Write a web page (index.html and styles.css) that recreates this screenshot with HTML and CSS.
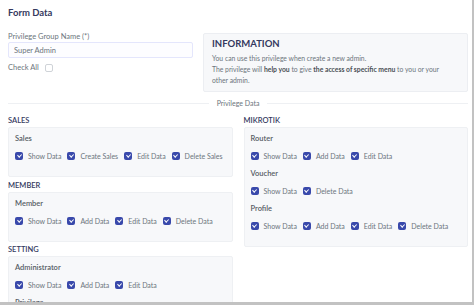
FILE: index.html
```html
<!DOCTYPE html>
<html lang="en">
<head>
    <meta charset="utf-8" />
    <title>Form Data</title>
    <link rel="stylesheet" href="styles.css">
</head>
<body>
    <div class="page">
        <h1 class="cardTitle">Form Data</h1>

        <div class="topRow">
            <div class="groupForm">
                <label class="fieldLabel">Privilege Group Name (*)</label>
                <input type="text" class="textInput" placeholder="Super Admin">
                <div class="checkAll">
                    <span>Check All</span>
                    <span class="box empty"></span>
                </div>
            </div>
            <div class="infoBox">
                <h2>INFORMATION</h2>
                <p>You can use this privilege when create a new admin.</p>
                <p>The privilege will <b>help you</b> to give <b>the access of specific menu</b> to you or your other admin.</p>
            </div>
        </div>

        <div class="divider"><span>Privilege Data</span></div>

        <div class="columns">
            <div class="column">
                <h3 class="sectionTitle">SALES</h3>
                <div class="panel">
                    <h4>Sales</h4>
                    <div class="checks">
                        <span class="item"><span class="box"></span>Show Data</span>
                        <span class="item"><span class="box"></span>Create Sales</span>
                        <span class="item"><span class="box"></span>Edit Data</span>
                        <span class="item"><span class="box"></span>Delete Sales</span>
                    </div>
                </div>

                <h3 class="sectionTitle">MEMBER</h3>
                <div class="panel">
                    <h4>Member</h4>
                    <div class="checks">
                        <span class="item"><span class="box"></span>Show Data</span>
                        <span class="item"><span class="box"></span>Add Data</span>
                        <span class="item"><span class="box"></span>Edit Data</span>
                        <span class="item"><span class="box"></span>Delete Data</span>
                    </div>
                </div>

                <h3 class="sectionTitle">SETTING</h3>
                <div class="panel">
                    <h4>Administrator</h4>
                    <div class="checks">
                        <span class="item"><span class="box"></span>Show Data</span>
                        <span class="item"><span class="box"></span>Add Data</span>
                        <span class="item"><span class="box"></span>Edit Data</span>
                    </div>
                    <h4>Privilege</h4>
                    <div class="checks">
                        <span class="item"><span class="box"></span>Show Data</span>
                        <span class="item"><span class="box"></span>Add Data</span>
                    </div>
                </div>
            </div>

            <div class="column">
                <h3 class="sectionTitle">MIKROTIK</h3>
                <div class="panel">
                    <h4>Router</h4>
                    <div class="checks">
                        <span class="item"><span class="box"></span>Show Data</span>
                        <span class="item"><span class="box"></span>Add Data</span>
                        <span class="item"><span class="box"></span>Edit Data</span>
                    </div>
                    <h4>Voucher</h4>
                    <div class="checks">
                        <span class="item"><span class="box"></span>Show Data</span>
                        <span class="item"><span class="box"></span>Delete Data</span>
                    </div>
                    <h4>Profile</h4>
                    <div class="checks">
                        <span class="item"><span class="box"></span>Show Data</span>
                        <span class="item"><span class="box"></span>Add Data</span>
                        <span class="item"><span class="box"></span>Edit Data</span>
                        <span class="item"><span class="box"></span>Delete Data</span>
                    </div>
                </div>
            </div>
        </div>
    </div>
</body>
</html>
```

FILE: styles.css
```css
h1,
h2,
h3,
h4,
p {
    margin: 0;
    padding: 0;
}

body {
    margin: 0;
    background-color: #c2c2c2;
    font-family: "Lato", "Open Sans", sans-serif;
    color: #6c757d;
}

.page {
    width: 472px;
    height: 302px;
    overflow: hidden;
    background-color: #ffffff;
    box-sizing: border-box;
    padding: 7px 4px 0 8px;
}

.cardTitle {
    font-size: 9.5px;
    font-weight: 700;
    color: #34395e;
    height: 22px;
}

.topRow {
    display: flex;
    gap: 10px;
    align-items: flex-start;
}

.groupForm {
    width: 185px;
    flex-shrink: 0;
    padding-top: 3px;
}

.fieldLabel {
    display: block;
    font-size: 7.5px;
    line-height: 9px;
    color: #6c757d;
    margin-bottom: 1px;
}

.textInput {
    display: block;
    width: 100%;
    height: 16px;
    box-sizing: border-box;
    border: 1px solid #e4e6fc;
    border-radius: 2px;
    background: #fdfdff;
    padding: 0 5px;
    font-family: inherit;
    font-size: 7.5px;
}

.textInput::placeholder {
    color: #6c757d;
}

.checkAll {
    display: flex;
    align-items: center;
    gap: 6px;
    margin-top: 5px;
    font-size: 7.5px;
    line-height: 9px;
}

.infoBox {
    flex: 1;
    margin-top: 4px;
    background-color: #f7f8fa;
    border: 1px solid #eceef2;
    border-radius: 2px;
    padding: 4px 16px 5px 8px;
    font-size: 6.8px;
    line-height: 11px;
}

.infoBox h2 {
    font-size: 9.5px;
    font-weight: 700;
    color: #34395e;
    margin-bottom: 3px;
    line-height: 12px;
}

.infoBox b {
    color: #4a4f55;
}

.divider {
    display: flex;
    align-items: center;
    gap: 8px;
    margin: 6px 0 7px 0;
    font-size: 7px;
    height: 10px;
}

.divider::before,
.divider::after {
    content: "";
    flex: 1;
    height: 1px;
    background-color: #eef0f3;
}

.columns {
    display: flex;
    gap: 11px;
}

.column {
    flex: 1;
    min-width: 0;
}

.sectionTitle {
    font-size: 7.5px;
    font-weight: 600;
    color: #34395e;
    height: 11px;
    line-height: 11px;
    margin-bottom: 1px;
}

.panel {
    background-color: #f7f8fa;
    border: 1px solid #eef0f3;
    border-radius: 2px;
    padding: 5px 6px 7px 6px;
    margin-bottom: 2.5px;
}

.panel h4 {
    font-size: 7.5px;
    font-weight: 600;
    color: #555b64;
    line-height: 11px;
    margin-bottom: 7px;
}

.checks {
    display: flex;
    gap: 6px;
    font-size: 7px;
    line-height: 10px;
    white-space: nowrap;
    margin-bottom: 7px;
}

.checks:last-child {
    margin-bottom: 8px;
}

.item {
    display: flex;
    align-items: center;
    gap: 5px;
}

.box {
    display: inline-block;
    flex-shrink: 0;
    width: 8px;
    height: 8px;
    border-radius: 2px;
    background-color: #3949ab;
    position: relative;
}

.box::after {
    content: "";
    position: absolute;
    left: 2.6px;
    top: 1.4px;
    width: 1.6px;
    height: 3.4px;
    border: solid #ffffff;
    border-width: 0 1px 1px 0;
    transform: rotate(45deg);
}

.box.empty {
    background-color: #ffffff;
    border: 1px solid #cfd3d8;
    box-sizing: border-box;
}

.box.empty::after {
    display: none;
}
```
